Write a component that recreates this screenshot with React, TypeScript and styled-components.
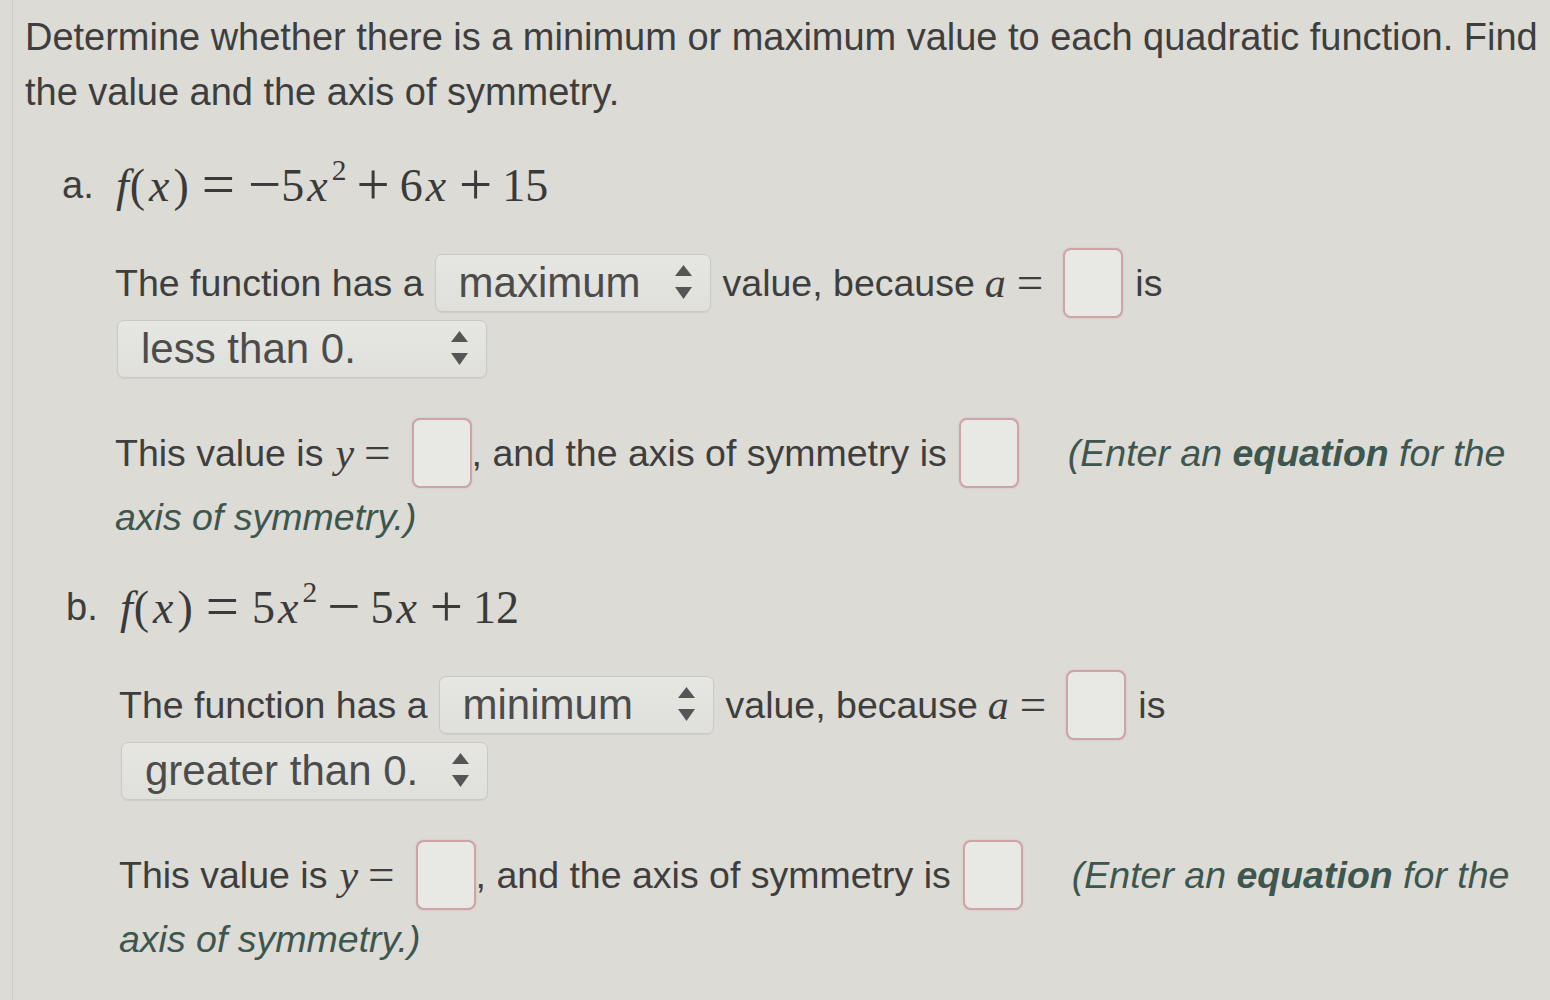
import React from "react";
import styled, { createGlobalStyle } from "styled-components";

const Global = createGlobalStyle`
  html, body { margin: 0; padding: 0; background: #dcdbd6; }
  body { font-family: "Liberation Sans", Arial, sans-serif; color: #3e3e3e; }
`;

const Page = styled.div`
  width: 1550px;
  height: 1000px;
  box-sizing: border-box;
  overflow: hidden;
  padding-left: 12px;
  background: #dcdbd6;
`;

const Panel = styled.div`
  height: 100%;
  box-sizing: border-box;
  border-left: 1px solid rgba(0, 0, 0, 0.07);
  padding: 10px 0 0 12px;
`;

const Title = styled.p`
  margin: 0;
  font-size: 38px;
  line-height: 55px;
  letter-spacing: -0.02px;
`;

const Item = styled.section<{ $top: number; $shift: number }>`
  display: grid;
  grid-template-columns: 53px 1fr;
  margin-top: ${(p) => p.$top}px;
  margin-left: ${(p) => 37 + p.$shift}px;
`;

const Marker = styled.div`
  font-size: 38px;
  height: 60px;
  line-height: 60px;
`;

const Body = styled.div`
  display: flex;
  flex-direction: column;
`;

const Row = styled.div<{ $h: number; $mt?: number }>`
  display: flex;
  align-items: center;
  height: ${(p) => p.$h}px;
  margin-top: ${(p) => p.$mt ?? 0}px;
  font-size: 37.5px;
  white-space: nowrap;
`;

const MathLine = styled.div`
  height: 60px;
  display: flex;
  align-items: center;
  font-family: "Liberation Serif", "DejaVu Serif", serif;
  font-size: 46px;
  color: #3a3a3a;
  white-space: nowrap;
`;

const V = styled.i<{ $pad?: number }>`
  display: inline-block;
  font-style: italic;
  padding: 0 ${(p) => p.$pad ?? 0}px;
`;

const Op = styled.span<{ $gap: number; $size?: number }>`
  display: inline-block;
  font-size: ${(p) => p.$size ?? 1.28}em;
  line-height: 1;
  margin: 0 ${(p) => p.$gap}px;
`;

const Sup = styled.span`
  display: inline-block;
  font-size: 0.64em;
  transform: translateY(-0.5em);
  margin-left: 1px;
`;

const InlineMath = styled.span<{ $ml?: number; $mr?: number }>`
  font-family: "Liberation Serif", "DejaVu Serif", serif;
  font-size: 42px;
  margin: 0 ${(p) => p.$mr ?? 12}px 0 ${(p) => p.$ml ?? 12}px;
  display: inline-flex;
  align-items: center;
`;

const SelectBox = styled.div<{ $w: number; $ml?: number }>`
  width: ${(p) => p.$w}px;
  height: 58px;
  box-sizing: border-box;
  margin: 0 12px 0 ${(p) => p.$ml ?? 0}px;
  border: 1.5px solid #c9c9c4;
  border-radius: 7px;
  background: linear-gradient(#e6e6e2, #dfdfdb);
  box-shadow: 0 1px 1px rgba(0, 0, 0, 0.06);
  display: flex;
  align-items: center;
  justify-content: space-between;
  padding: 0 18px 0 23px;
  font-size: 42px;
  color: #4c4c4c;
`;

const InputBox = styled.div<{ $ml?: number; $mr?: number }>`
  width: 60px;
  height: 70px;
  flex: none;
  box-sizing: border-box;
  margin: 0 ${(p) => p.$mr ?? 12}px 0 ${(p) => p.$ml ?? 0}px;
  border: 2px solid #cfa4a6;
  border-radius: 8px;
  background: #e8e8e5;
  box-shadow: 0 0 2px rgba(190, 120, 125, 0.35);
`;

const Hint = styled.span`
  font-style: italic;
  color: #3d564f;
`;

const Strong = styled.b`
  font-weight: bold;
`;

const Arrows = () => (
  <svg width="17" height="36" viewBox="0 0 17 36">
    <polygon points="8.5,0 17,11 0,11" fill="#555" />
    <polygon points="0,22 17,22 8.5,34" fill="#555" />
  </svg>
);

const Select = ({ value, w, ml }: { value: string; w: number; ml?: number }) => (
  <SelectBox $w={w} $ml={ml}>
    <span>{value}</span>
    <Arrows />
  </SelectBox>
);

type Part = {
  marker: string;
  fn: React.ReactNode;
  kind: string;
  cmp: string;
  kindW: number;
  cmpW: number;
  top: number;
  shift: number;
};

const Question = ({ p }: { p: Part }) => (
  <Item $top={p.top} $shift={p.shift}>
    <Marker>{p.marker}</Marker>
    <Body>
      <MathLine>{p.fn}</MathLine>
      <Row $h={72} $mt={32}>
        The function has a
        <Select value={p.kind} w={p.kindW} ml={11} />
        value, because
        <InlineMath $ml={10} $mr={9}>
          <V>a</V>
          <Op $gap={11} $size={1.12}>=</Op>
        </InlineMath>
        <InputBox />
        is
      </Row>
      <Row $h={60}>
        <Select value={p.cmp} w={p.cmpW} ml={2} />
      </Row>
      <Row $h={72} $mt={38}>
        This value is
        <InlineMath $ml={12} $mr={11}>
          <V>y</V>
          <Op $gap={10} $size={1.12}>=</Op>
        </InlineMath>
        <InputBox $mr={0} />, and the axis of symmetry is
        <InputBox $ml={12} $mr={49} />
        <Hint>
          (Enter an <Strong>equation</Strong> for the
        </Hint>
      </Row>
      <Row $h={52} $mt={2}>
        <Hint>axis of symmetry.)</Hint>
      </Row>
    </Body>
  </Item>
);

const parts: Part[] = [
  {
    marker: "a.",
    fn: (
      <>
        <V $pad={1}>f</V>(<V $pad={4}>x</V>)<Op $gap={13}>=</Op>
        <Op $gap={0}>−</Op>5<V $pad={3}>x</V>
        <Sup>2</Sup>
        <Op $gap={10}>+</Op>6<V $pad={3}>x</V>
        <Op $gap={10}>+</Op>15
      </>
    ),
    kind: "maximum",
    cmp: "less than 0.",
    kindW: 276,
    cmpW: 370,
    top: 35,
    shift: 0,
  },
  {
    marker: "b.",
    fn: (
      <>
        <V $pad={1}>f</V>(<V $pad={4}>x</V>)<Op $gap={13}>=</Op>5<V $pad={3}>x</V>
        <Sup>2</Sup>
        <Op $gap={10}>−</Op>5<V $pad={3}>x</V>
        <Op $gap={10}>+</Op>12
      </>
    ),
    kind: "minimum",
    cmp: "greater than 0.",
    kindW: 275,
    cmpW: 367,
    top: 34,
    shift: 4,
  },
];

export default function App() {
  return (
    <>
      <Global />
      <Page>
        <Panel>
          <Title>
            Determine whether there is a minimum or maximum value to each quadratic function. Find
            <br />
            the value and the axis of symmetry.
          </Title>
          {parts.map((p) => (
            <Question key={p.marker} p={p} />
          ))}
        </Panel>
      </Page>
    </>
  );
}
